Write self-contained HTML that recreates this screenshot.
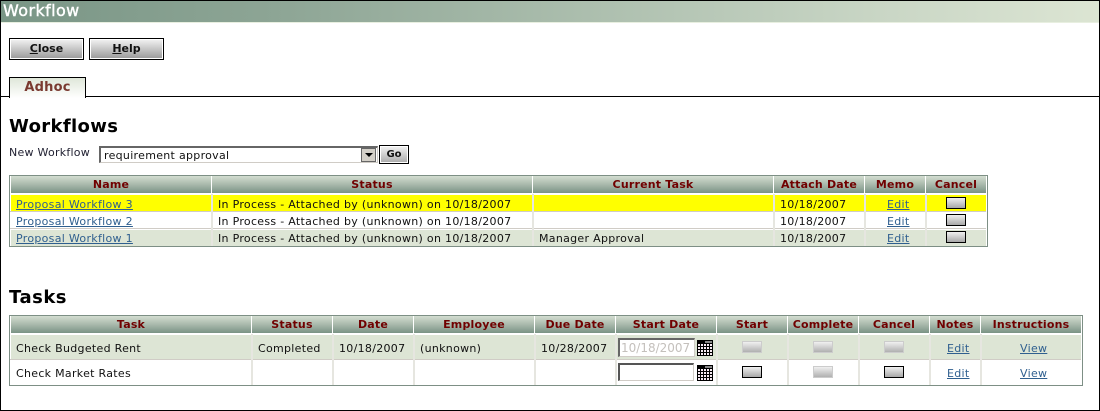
<!DOCTYPE html>
<html><head><meta charset="utf-8"><style>
html,body{margin:0;padding:0;background:#fff}
#p{position:relative;width:1100px;height:411px;overflow:hidden;background:#fff;font-family:"DejaVu Sans","Liberation Sans",sans-serif;font-size:11px;color:#111;letter-spacing:.3px}
#p div,#p a,#p span.a{position:absolute;white-space:nowrap}
.h{background:linear-gradient(#d3ddd0,#a9b9ac 50%,#7a9385);color:#700000;font-weight:bold;text-align:center;height:17px;line-height:18px;font-size:11px;letter-spacing:.2px}
.t{height:17px;line-height:19px}
a{color:#2f5f8f;text-decoration:underline}
.b{width:18px;height:10px;border:1px solid #000;background:linear-gradient(#f0f0f0,#a8a8a8)}
.d{width:18px;height:10px;border:1px solid #ccc;background:linear-gradient(#f0f0f0,#b0b0b0)}
.btn{border:1px solid #000;background:linear-gradient(#f4f4f4,#999);font-weight:bold;text-align:center;height:20px;line-height:20px;font-size:11px;box-shadow:inset 0 0 0 1px #fff;width:73px;top:38px;letter-spacing:0}
.hl{background:#d0ccc6;height:1px}
</style></head><body><div id="p">
<div style="left:0;top:0;width:1100px;height:1px;background:#000"></div>
<div style="left:0;top:0;width:1px;height:411px;background:#000"></div>
<div style="left:1099px;top:0;width:1px;height:411px;background:#000"></div>
<div style="left:0;top:410px;width:1100px;height:1px;background:#000"></div>
<div style="left:1px;top:1px;width:1098px;height:21px;background:linear-gradient(90deg,#7a9686,#8da595 25%,#c9d6c5 80%,#dce5d3);color:#fff;font-size:16px;line-height:20px;font-weight:normal;text-indent:2px;-webkit-text-stroke:.4px #fff;letter-spacing:.4px">Workflow</div>
<div style="left:1px;top:22px;width:1098px;height:1px;background:#e8efe0"></div>

<div class="btn" style="left:9px"><u>C</u>lose</div>
<div class="btn" style="left:89px"><u>H</u>elp</div>

<div style="left:0;top:96px;width:1100px;height:1px;background:#000"></div>
<div style="left:9px;top:77px;width:75px;height:20px;border:1px solid #000;border-bottom:0;background:linear-gradient(#dfe7d9,#fff);color:#7a3a30;font-weight:bold;font-size:13px;line-height:19px;text-align:center;letter-spacing:.2px">Adhoc</div>

<div style="left:9px;top:116px;font-size:18px;font-weight:bold;color:#000;line-height:22px;letter-spacing:.35px">Workflows</div>
<div style="left:9px;top:145px;font-size:11px;line-height:15px;color:#223;letter-spacing:.25px">New Workflow</div>
<div style="left:99px;top:146px;width:279px;height:17px;box-sizing:border-box;border:1px solid;border-width:2px 1px 1px 2px;border-color:#666 #d0ccc6 #d0ccc6 #666;font-size:11px;line-height:15px;text-indent:3px">requirement approval</div>
<div style="left:361px;top:148px;width:15px;height:14px;background:#d4d0c8;border:1px solid #666;box-sizing:border-box"></div>
<div style="left:365px;top:153px;width:0;height:0;border:4px solid transparent;border-top:4px solid #000;border-bottom:0"></div>
<div style="left:379px;top:145px;width:28px;height:17px;border:1px solid #000;background:linear-gradient(#f4f4f4,#aaa);font-weight:bold;font-size:10px;text-align:center;line-height:18px;box-shadow:inset 0 0 0 1px #fff;letter-spacing:0">Go</div>

<!-- Workflows table -->
<div style="left:9px;top:175px;width:977px;height:70px;border:1px solid #7d8f85;border-width:1px;background:#fff"></div>
<div style="left:10px;top:176px;width:976px;height:1px;background:#fff"></div>
<div class="h" style="left:11px;top:176px;width:200px">Name</div>
<div class="h" style="left:212px;top:176px;width:320px">Status</div>
<div class="h" style="left:533px;top:176px;width:240px">Current Task</div>
<div class="h" style="left:774px;top:176px;width:90px">Attach Date</div>
<div class="h" style="left:865px;top:176px;width:60px">Memo</div>
<div class="h" style="left:926px;top:176px;width:60px">Cancel</div>
<div style="left:11px;top:195px;width:975px;height:16px;background:#ff0"></div>
<div style="left:11px;top:230px;width:975px;height:16px;background:#dde5d5"></div>
<div class="hl" style="left:10px;top:211px;width:976px"></div>
<div class="hl" style="left:10px;top:228px;width:976px"></div>
<div style="left:211px;top:194px;width:2px;height:52px;background:#e6e6e0"></div>
<div style="left:532px;top:194px;width:2px;height:52px;background:#e6e6e0"></div>
<div style="left:773px;top:194px;width:2px;height:52px;background:#e6e6e0"></div>
<div style="left:864px;top:194px;width:2px;height:52px;background:#e6e6e0"></div>
<div style="left:925px;top:194px;width:2px;height:52px;background:#e6e6e0"></div>

<a class="t" style="left:16px;top:195px">Proposal Workflow 3</a>
<a class="t" style="left:16px;top:212px">Proposal Workflow 2</a>
<a class="t" style="left:16px;top:229px">Proposal Workflow 1</a>
<div class="t" style="left:218px;top:195px">In Process - Attached by (unknown) on 10/18/2007</div>
<div class="t" style="left:218px;top:212px">In Process - Attached by (unknown) on 10/18/2007</div>
<div class="t" style="left:218px;top:229px">In Process - Attached by (unknown) on 10/18/2007</div>
<div class="t" style="left:539px;top:229px">Manager Approval</div>
<div class="t" style="left:780px;top:195px">10/18/2007</div>
<div class="t" style="left:780px;top:212px">10/18/2007</div>
<div class="t" style="left:780px;top:229px">10/18/2007</div>
<a class="t" style="left:887px;top:195px">Edit</a>
<a class="t" style="left:887px;top:212px">Edit</a>
<a class="t" style="left:887px;top:229px">Edit</a>
<div class="b" style="left:946px;top:197px"></div>
<div class="b" style="left:946px;top:214px"></div>
<div class="b" style="left:946px;top:231px"></div>

<div style="left:9px;top:287px;font-size:18px;font-weight:bold;color:#000;line-height:22px;letter-spacing:.5px">Tasks</div>

<!-- Tasks table -->
<div style="left:9px;top:315px;width:1072px;height:69px;border:1px solid #7d8f85;border-top-color:#7d8f85;background:#fff"></div>
<div class="h" style="left:11px;top:316px;width:240px">Task</div>
<div class="h" style="left:252px;top:316px;width:80px">Status</div>
<div class="h" style="left:333px;top:316px;width:80px">Date</div>
<div class="h" style="left:414px;top:316px;width:120px">Employee</div>
<div class="h" style="left:535px;top:316px;width:80px">Due Date</div>
<div class="h" style="left:616px;top:316px;width:100px">Start Date</div>
<div class="h" style="left:717px;top:316px;width:70px">Start</div>
<div class="h" style="left:788px;top:316px;width:70px">Complete</div>
<div class="h" style="left:859px;top:316px;width:70px">Cancel</div>
<div class="h" style="left:930px;top:316px;width:50px">Notes</div>
<div class="h" style="left:981px;top:316px;width:100px">Instructions</div>
<div style="left:11px;top:335px;width:1070px;height:24px;background:#dde5d5"></div>
<div class="hl" style="left:10px;top:359px;width:1071px"></div>
<div style="left:251px;top:334px;width:2px;height:51px;background:#e6e6e0"></div>
<div style="left:332px;top:334px;width:2px;height:51px;background:#e6e6e0"></div>
<div style="left:413px;top:334px;width:2px;height:51px;background:#e6e6e0"></div>
<div style="left:534px;top:334px;width:2px;height:51px;background:#e6e6e0"></div>
<div style="left:615px;top:334px;width:2px;height:51px;background:#e6e6e0"></div>
<div style="left:716px;top:334px;width:2px;height:51px;background:#e6e6e0"></div>
<div style="left:787px;top:334px;width:2px;height:51px;background:#e6e6e0"></div>
<div style="left:858px;top:334px;width:2px;height:51px;background:#e6e6e0"></div>
<div style="left:929px;top:334px;width:2px;height:51px;background:#e6e6e0"></div>
<div style="left:980px;top:334px;width:2px;height:51px;background:#e6e6e0"></div>

<div class="t" style="left:16px;top:339px">Check Budgeted Rent</div>
<div class="t" style="left:16px;top:364px">Check Market Rates</div>
<div class="t" style="left:258px;top:339px">Completed</div>
<div class="t" style="left:339px;top:339px">10/18/2007</div>
<div class="t" style="left:420px;top:339px">(unknown)</div>
<div class="t" style="left:541px;top:339px">10/28/2007</div>
<div style="left:618px;top:338px;width:74px;height:16px;border:1px solid;border-width:2px 1px 1px 2px;border-color:#666 #d0ccc6 #d0ccc6 #666;background:#fff;color:#c4c0bc;font-size:12px;line-height:17px;text-indent:1px;letter-spacing:0">10/18/2007</div>
<div style="left:618px;top:363px;width:73px;height:15px;border:1px solid;border-color:#555 #d0ccc6 #d0ccc6 #555;border-width:2px 1px 1px 2px;background:#fff"></div>
<svg style="position:absolute;left:697px;top:340px" width="16" height="16" viewBox="0 0 16 16"><rect width="16" height="16" fill="#000"/><rect x="8" y="1" width="7" height="2" fill="#888"/><rect x="1" y="4" width="14" height="11" fill="#f8ecf4"/><path d="M0 6.5h16M0 9.5h16M0 12.5h16M3.5 4v11M6.5 4v11M9.5 4v11M12.5 4v11" stroke="#000" fill="none"/></svg>
<svg style="position:absolute;left:697px;top:365px" width="16" height="16" viewBox="0 0 16 16"><rect width="16" height="16" fill="#000"/><rect x="8" y="1" width="7" height="2" fill="#888"/><rect x="1" y="4" width="14" height="11" fill="#f8ecf4"/><path d="M0 6.5h16M0 9.5h16M0 12.5h16M3.5 4v11M6.5 4v11M9.5 4v11M12.5 4v11" stroke="#000" fill="none"/></svg>
<div class="d" style="left:742px;top:341px"></div>
<div class="d" style="left:813px;top:341px"></div>
<div class="d" style="left:884px;top:341px"></div>
<div class="b" style="left:742px;top:366px"></div>
<div class="d" style="left:813px;top:366px"></div>
<div class="b" style="left:884px;top:366px"></div>
<a class="t" style="left:947px;top:339px">Edit</a>
<a class="t" style="left:947px;top:364px">Edit</a>
<a class="t" style="left:1020px;top:339px">View</a>
<a class="t" style="left:1020px;top:364px">View</a>
</div></body></html>
